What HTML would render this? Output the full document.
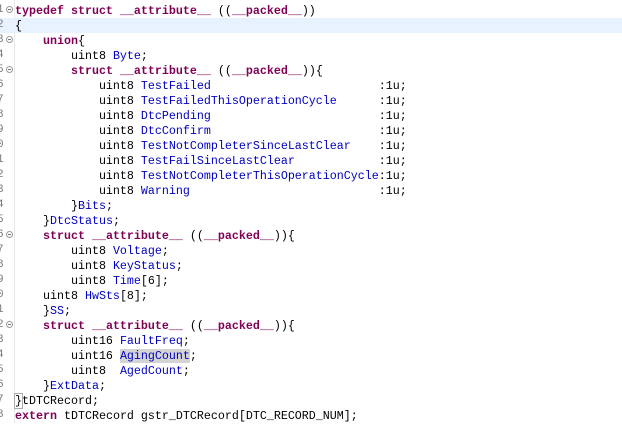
<!DOCTYPE html>
<html><head><style>
body{margin:0;width:622px;height:423px;background:#fff;overflow:hidden;position:relative;font-family:"Liberation Mono",monospace;}
.g{position:absolute;left:0;top:0;width:14px;height:423px;background:#fff;border-right:1px solid #e8e8e8;}
.r{position:absolute;left:0;width:622px;height:15px;font-size:11.67px;line-height:15px;white-space:pre;color:#000;}
.n{position:absolute;left:-3px;width:8px;color:#787878;font-size:11px;}
.f{position:absolute;left:6px;top:3px;width:7px;height:7px;border:1px solid #9a9a9a;border-radius:50%;box-sizing:border-box;}
.f:after{content:"";position:absolute;left:1px;top:2px;width:3px;height:1px;background:#777;}
.c{position:absolute;left:15px;top:1px;}
.k{color:#7f0055;font-weight:bold;}
.b{color:#0000c0;}
.h{background:#d4d4d4;}
</style></head><body>
<div class="g"></div>
<div class="r" style="top:3px"><span class="n">1</span><span class="f"></span><span class="c"><span class="k">typedef struct __attribute__</span> ((<span class="k">__packed__</span>))</span></div>
<div class="r" style="top:18px;background:#e8f2fe"><span class="n">2</span><span class="c">{</span></div>
<div class="r" style="top:33px"><span class="n">3</span><span class="f"></span><span class="c">    <span class="k">union</span>{</span></div>
<div class="r" style="top:48px"><span class="n">4</span><span class="c">        uint8 <span class="b">Byte</span>;</span></div>
<div class="r" style="top:63px"><span class="n">5</span><span class="f"></span><span class="c">        <span class="k">struct __attribute__</span> ((<span class="k">__packed__</span>)){</span></div>
<div class="r" style="top:78px"><span class="n">6</span><span class="c">            uint8 <span class="b">TestFailed</span>                        :1u;</span></div>
<div class="r" style="top:93px"><span class="n">7</span><span class="c">            uint8 <span class="b">TestFailedThisOperationCycle</span>      :1u;</span></div>
<div class="r" style="top:108px"><span class="n">8</span><span class="c">            uint8 <span class="b">DtcPending</span>                        :1u;</span></div>
<div class="r" style="top:123px"><span class="n">9</span><span class="c">            uint8 <span class="b">DtcConfirm</span>                        :1u;</span></div>
<div class="r" style="top:138px"><span class="n">0</span><span class="c">            uint8 <span class="b">TestNotCompleterSinceLastClear</span>    :1u;</span></div>
<div class="r" style="top:153px"><span class="n">1</span><span class="c">            uint8 <span class="b">TestFailSinceLastClear</span>            :1u;</span></div>
<div class="r" style="top:168px"><span class="n">2</span><span class="c">            uint8 <span class="b">TestNotCompleterThisOperationCycle</span>:1u;</span></div>
<div class="r" style="top:183px"><span class="n">3</span><span class="c">            uint8 <span class="b">Warning</span>                           :1u;</span></div>
<div class="r" style="top:198px"><span class="n">4</span><span class="c">        }<span class="b">Bits</span>;</span></div>
<div class="r" style="top:213px"><span class="n">5</span><span class="c">    }<span class="b">DtcStatus</span>;</span></div>
<div class="r" style="top:228px"><span class="n">6</span><span class="f"></span><span class="c">    <span class="k">struct __attribute__</span> ((<span class="k">__packed__</span>)){</span></div>
<div class="r" style="top:243px"><span class="n">7</span><span class="c">        uint8 <span class="b">Voltage</span>;</span></div>
<div class="r" style="top:258px"><span class="n">8</span><span class="c">        uint8 <span class="b">KeyStatus</span>;</span></div>
<div class="r" style="top:273px"><span class="n">9</span><span class="c">        uint8 <span class="b">Time</span>[6];</span></div>
<div class="r" style="top:288px"><span class="n">0</span><span class="c">    uint8 <span class="b">HwSts</span>[8];</span></div>
<div class="r" style="top:303px"><span class="n">1</span><span class="c">    }<span class="b">SS</span>;</span></div>
<div class="r" style="top:318px"><span class="n">2</span><span class="f"></span><span class="c">    <span class="k">struct __attribute__</span> ((<span class="k">__packed__</span>)){</span></div>
<div class="r" style="top:333px"><span class="n">3</span><span class="c">        uint16 <span class="b">FaultFreq</span>;</span></div>
<div class="r" style="top:348px"><span class="n">4</span><span class="c">        uint16 <span class="b h">AgingCount</span>;</span></div>
<div class="r" style="top:363px"><span class="n">5</span><span class="c">        uint8  <span class="b">AgedCount</span>;</span></div>
<div class="r" style="top:378px"><span class="n">6</span><span class="c">    }<span class="b">ExtData</span>;</span></div>
<div class="r" style="top:393px"><span class="n">7</span><span class="c"><span style="outline:1px solid #aaa">}</span>tDTCRecord;</span></div>
<div class="r" style="top:408px"><span class="n">8</span><span class="c"><span class="k">extern</span> tDTCRecord gstr_DTCRecord[DTC_RECORD_NUM];</span></div>
</body></html>
